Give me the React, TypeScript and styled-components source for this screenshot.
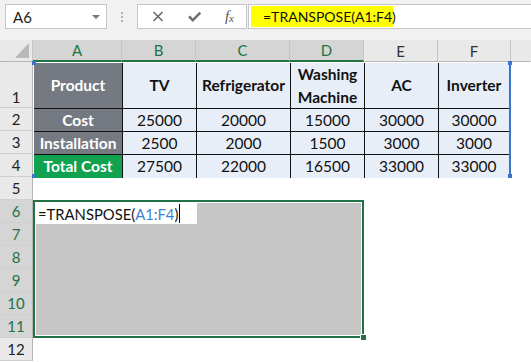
import styled, { createGlobalStyle } from "styled-components";

const GlobalStyle = createGlobalStyle`
  body {
    margin: 0;
    background: #ffffff;
    font-family: Lato, "Liberation Sans", sans-serif;
    overflow: hidden;
  }
`;

const GREEN = "#217346";
const COL_WIDTHS = [89, 74, 94, 74, 74, 73];
const LETTERS = ["A", "B", "C", "D", "E", "F", ""];
const SELECTED_COLS = ["A", "B", "C", "D"];
const SELECTED_ROWS = [6, 7, 8, 9, 10, 11];

type Kind = "label" | "total" | "head" | "data";

const rows: { cells: string[] }[] = [
  { cells: ["Product", "TV", "Refrigerator", "Washing Machine", "AC", "Inverter"] },
  { cells: ["Cost", "25000", "20000", "15000", "30000", "30000"] },
  { cells: ["Installation", "2500", "2000", "1500", "3000", "3000"] },
  { cells: ["Total Cost", "27500", "22000", "16500", "33000", "33000"] },
];

const App = () => {
  return (
    <Page>
      <GlobalStyle />
      <FormulaBar>
        <NameBox>
          <span>A6</span>
          <DropArrow />
        </NameBox>
        <Grip>
          <i />
          <i />
          <i />
        </Grip>
        <ButtonBox>
          <svg width="12" height="11" viewBox="0 0 12 11">
            <path d="M1.5 1 L10.5 10 M10.5 1 L1.5 10" stroke="#6a6a6a" strokeWidth="1.6" fill="none" />
          </svg>
          <svg width="15" height="12" viewBox="0 0 15 12">
            <path d="M1 6.2 L3.2 4.4 L5.8 7.4 L12.4 0.8 L14.2 2.6 L5.8 11 Z" fill="#707070" />
          </svg>
          <Fx>
            f<sub>x</sub>
          </Fx>
        </ButtonBox>
        <FormulaBox>
          <Highlight>=TRANSPOSE(A1:F4)</Highlight>
        </FormulaBox>
      </FormulaBar>

      <Sheet>
        <Corner>
          <svg width="14" height="15" viewBox="0 0 14 15">
            <path d="M14 0 L14 15 L0 15 Z" fill="#b8b8b8" />
          </svg>
        </Corner>
        {LETTERS.map((l, i) => (
          <ColHeader key={i} $selected={SELECTED_COLS.includes(l)} $last={l === ""}>
            {l}
          </ColHeader>
        ))}

        {Array.from({ length: 12 }, (_, i) => i + 1).map((n) => (
          <RowHeader key={n} $selected={SELECTED_ROWS.includes(n)} $bottom={n === 1} style={{ gridRow: n + 1 }}>
            {n}
          </RowHeader>
        ))}

        <DataTable>
          {rows.map((r, ri) =>
            r.cells.map((c, ci) => {
              let kind: Kind = "data";
              if (ci === 0) kind = ri === 3 ? "total" : "label";
              else if (ri === 0) kind = "head";
              return (
                <Cell key={`${ri}-${ci}`} $kind={kind} $lastCol={ci === 5} $lastRow={ri === 3}>
                  {c}
                </Cell>
              );
            })
          )}
          <Handle $pos="tl" />
          <Handle $pos="tr" />
          <Handle $pos="bl" />
          <Handle $pos="br" />
        </DataTable>

        <Selection>
          <Editor>
            =TRANSPOSE(<Ref>A1:F4</Ref>)<Caret />
          </Editor>
          <FillHandle />
        </Selection>
      </Sheet>
    </Page>
  );
};

const Page = styled.div`
  width: 531px;
  height: 362px;
  display: flex;
  flex-direction: column;
  overflow: hidden;
`;

const FormulaBar = styled.div`
  height: 40px;
  box-sizing: border-box;
  display: flex;
  align-items: flex-start;
  padding: 4px 0 0 5px;
  background: #f1f1f1;
`;

const NameBox = styled.div`
  width: 102px;
  height: 25px;
  box-sizing: border-box;
  display: flex;
  align-items: center;
  justify-content: space-between;
  padding: 0 6px 0 7px;
  background: #ffffff;
  border: 1px solid #c6c6c6;
  font-size: 15px;
  color: #222;
`;

const DropArrow = styled.i`
  width: 0;
  height: 0;
  border-left: 4px solid transparent;
  border-right: 4px solid transparent;
  border-top: 4px solid #777;
`;

const Grip = styled.div`
  width: 30px;
  height: 25px;
  display: flex;
  flex-direction: column;
  align-items: center;
  justify-content: center;
  gap: 2px;
  i {
    width: 2px;
    height: 2px;
    background: #b0b0b0;
  }
`;

const ButtonBox = styled.div`
  width: 110px;
  height: 25px;
  box-sizing: border-box;
  display: flex;
  align-items: center;
  justify-content: space-between;
  padding: 0 12px 0 14px;
  background: #ffffff;
  border: 1px solid #c6c6c6;
`;

const Fx = styled.span`
  font-family: "Liberation Serif", serif;
  font-style: italic;
  font-size: 15px;
  color: #555;
  sub {
    font-size: 11px;
    vertical-align: -1px;
  }
`;

const FormulaBox = styled.div`
  flex: 1;
  height: 25px;
  margin-left: 1px;
  box-sizing: border-box;
  display: flex;
  align-items: stretch;
  padding: 1px 0 1px 2px;
  background: #ffffff;
  border: 1px solid #c6c6c6;
  border-right: none;
`;

const Highlight = styled.div`
  width: 142px;
  box-sizing: border-box;
  padding-left: 12px;
  display: flex;
  align-items: center;
  background: #ffff00;
  font-size: 14px;
  color: #111;
`;

const Sheet = styled.div`
  flex: 1;
  display: grid;
  grid-template-columns: 33px ${COL_WIDTHS.map((w) => `${w}px`).join(" ")} 1fr;
  grid-template-rows: 22px 46px repeat(11, 23px);
`;

const Corner = styled.div`
  background: #e9e9e9;
  border-right: 1px solid #c4c4c4;
  border-bottom: 1px solid #b5b5b5;
  display: flex;
  align-items: flex-end;
  justify-content: flex-end;
  padding: 0 3px 3px 0;
`;

const ColHeader = styled.div<{ $selected: boolean; $last: boolean }>`
  display: flex;
  align-items: center;
  justify-content: center;
  font-size: 15px;
  background: ${(p) => (p.$selected ? "#d5d5d5" : "#e9e9e9")};
  color: ${(p) => (p.$selected ? GREEN : "#333")};
  border-right: 1px solid ${(p) => (p.$last ? "transparent" : "#c4c4c4")};
  border-bottom: ${(p) => (p.$selected ? `2px solid ${GREEN}` : "1px solid #b5b5b5")};
  box-sizing: border-box;
`;

const RowHeader = styled.div<{ $selected: boolean; $bottom: boolean }>`
  grid-column: 1;
  display: flex;
  align-items: ${(p) => (p.$bottom ? "flex-end" : "center")};
  justify-content: center;
  padding-bottom: ${(p) => (p.$bottom ? "1px" : "0")};
  font-size: 15px;
  background: ${(p) => (p.$selected ? "#d5d5d5" : "#e9e9e9")};
  color: ${(p) => (p.$selected ? GREEN : "#222")};
  border-right: 1px solid #b5b5b5;
  border-bottom: 1px solid #cfcfcf;
  box-sizing: border-box;
`;

const DataTable = styled.div`
  grid-column: 2 / 8;
  grid-row: 2 / 6;
  position: relative;
  display: grid;
  grid-template-columns: 89px 74px 94px 74px 74px 1fr;
  grid-template-rows: 46px 23px 23px 1fr;
  box-sizing: border-box;
  border-right: 2px solid #3b74cc;
  border-bottom: 2px solid #3b74cc;
  border-top: 1px solid #ffffff;
  border-left: 1px solid #ffffff;
`;

const cellBg: Record<Kind, string> = {
  label: "#757a82",
  total: "#10a24f",
  head: "#e8eef8",
  data: "#e8eef8",
};

const Cell = styled.div<{ $kind: Kind; $lastCol: boolean; $lastRow: boolean }>`
  display: flex;
  align-items: center;
  justify-content: center;
  text-align: center;
  line-height: 23px;
  font-size: 15.5px;
  font-weight: ${(p) => (p.$kind === "data" ? 400 : 700)};
  color: ${(p) => (p.$kind === "label" || p.$kind === "total" ? "#ffffff" : "#111")};
  background: ${(p) => cellBg[p.$kind]};
  border-right: ${(p) => (p.$lastCol ? "none" : "1px solid #111")};
  border-bottom: ${(p) => (p.$lastRow ? "none" : "1px solid #111")};
  box-sizing: border-box;
  padding: 0 2px;
`;

const Handle = styled.i<{ $pos: "tl" | "tr" | "bl" | "br" }>`
  position: absolute;
  width: 4px;
  height: 4px;
  background: #3b74cc;
  ${(p) => (p.$pos[0] === "t" ? "top: -2px;" : "bottom: -3px;")}
  ${(p) => (p.$pos[1] === "l" ? "left: -2px;" : "right: -3px;")}
`;

const Selection = styled.div`
  grid-column: 2 / 6;
  grid-row: 7 / 13;
  position: relative;
  box-sizing: border-box;
  background: #c6c6c6;
  border: 2px solid ${GREEN};
  box-shadow: inset 0 0 0 1px #ffffff;
  padding: 1px;
`;

const Editor = styled.div`
  width: 161px;
  height: 21px;
  display: flex;
  align-items: center;
  padding-left: 2px;
  box-sizing: border-box;
  background: #ffffff;
  font-size: 14.8px;
  color: #111;
  white-space: nowrap;
`;

const Ref = styled.span`
  color: #3f7fd8;
`;

const Caret = styled.i`
  width: 1px;
  height: 19px;
  margin-left: 1px;
  background: #000;
`;

const FillHandle = styled.i`
  position: absolute;
  right: -5px;
  bottom: -5px;
  width: 5px;
  height: 5px;
  background: ${GREEN};
  border: 1px solid #ffffff;
`;

export default App;
